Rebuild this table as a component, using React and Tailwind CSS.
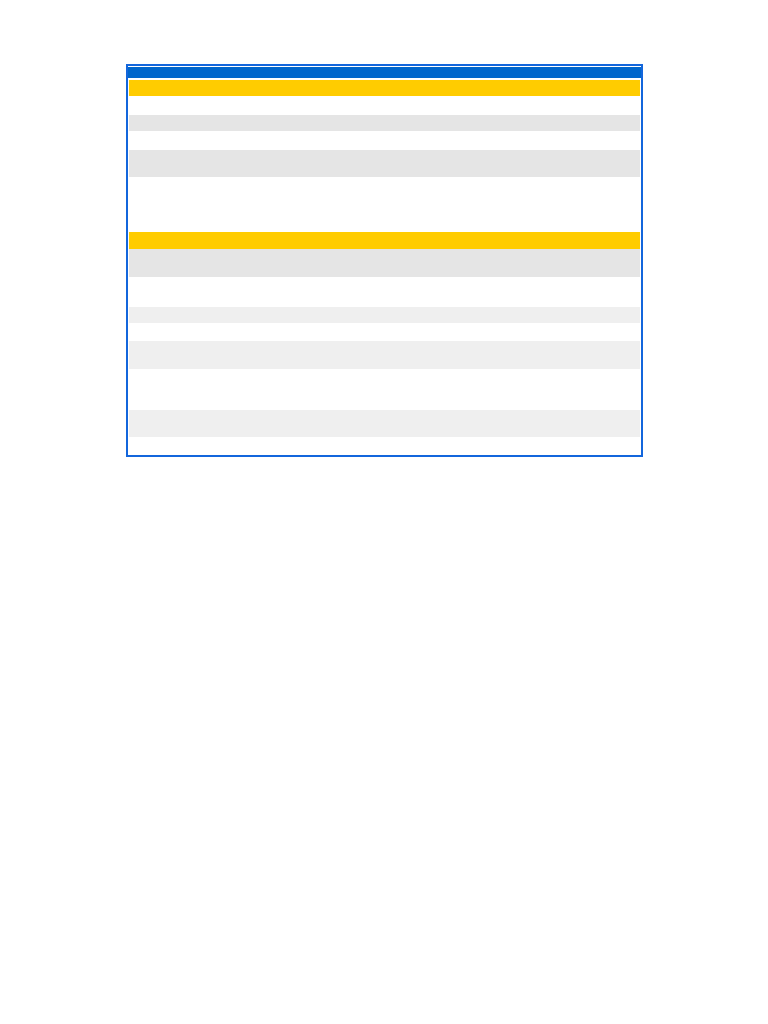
export default function App() {
  const rows = [
    { h: "h-[2px]", bg: "bg-white" },
    { h: "h-[16px]", bg: "bg-[#ffcc00]" },
    { h: "h-[19px]", bg: "bg-white" },
    { h: "h-[16px]", bg: "bg-[#e5e5e5]" },
    { h: "h-[19px]", bg: "bg-white" },
    { h: "h-[27px]", bg: "bg-[#e5e5e5]" },
    { h: "h-[55px]", bg: "bg-white" },
    { h: "h-[17px]", bg: "bg-[#ffcc00]" },
    { h: "h-[28px]", bg: "bg-[#e5e5e5]" },
    { h: "h-[30px]", bg: "bg-white" },
    { h: "h-[16px]", bg: "bg-[#efefef]" },
    { h: "h-[18px]", bg: "bg-white" },
    { h: "h-[28px]", bg: "bg-[#efefef]" },
    { h: "h-[41px]", bg: "bg-white" },
    { h: "h-[27px]", bg: "bg-[#efefef]" },
    { h: "h-[18px]", bg: "bg-white" },
  ];
  return (
    <div className="min-h-screen bg-white pt-[64px]" style={{ fontFamily: '"Liberation Sans", Arial, sans-serif' }}>
      <div className="mx-auto w-[517px] border-2 border-[#1366dc] bg-white pt-px">
        <div className="h-[11px] bg-[#0066cc]"></div>
        <div className="flex flex-col px-px">
          {rows.map((r, i) => (
            <div key={i} className={`${r.h} ${r.bg}`}></div>
          ))}
        </div>
      </div>
    </div>
  );
}
